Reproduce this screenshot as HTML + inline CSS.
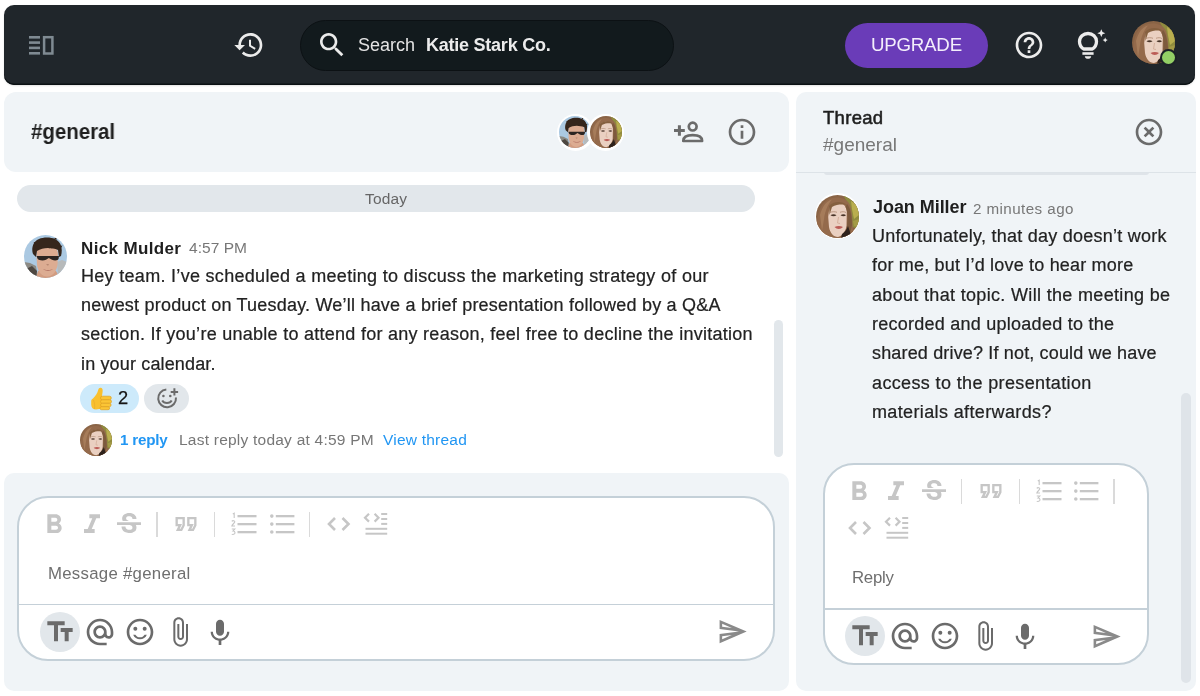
<!DOCTYPE html>
<html><head><meta charset="utf-8">
<style>
*{box-sizing:border-box;margin:0;padding:0}
html,body{width:1200px;height:696px;overflow:hidden;background:#fff;font-family:"Liberation Sans",sans-serif;color:#222}
.a{position:absolute}
.t{position:absolute;white-space:pre;line-height:1;will-change:transform}
svg{display:block}
</style></head><body>
<div class="a" style="left:4px;top:5px;width:1191.3px;height:79.6px;background:#20262b;border-radius:10px;box-shadow:inset 0 -1.6px 0 #0b1114, 0 1px 2px rgba(0,0,0,0.12)"></div>
<svg class="a" style="left:29px;top:36px;overflow:visible" width="26" height="20" viewBox="0 0 26 20"><g fill="#7f8a92"><rect x="0" y="0" width="11" height="2.6"/><rect x="0" y="5.3" width="11" height="2.6"/><rect x="0" y="10.6" width="11" height="2.6"/><rect x="0" y="16" width="11" height="2.6"/></g>
<rect x="15.1" y="1.2" width="8.3" height="16.3" fill="none" stroke="#7f8a92" stroke-width="2.5"/></svg>
<svg class="a" style="left:233.3px;top:28.6px" width="32" height="32" viewBox="0 0 24 24"><path fill="#ebebeb" d="M13 3c-4.97 0-9 4.03-9 9H1l3.89 3.89.07.14L9 12H6c0-3.87 3.13-7 7-7s7 3.13 7 7-3.13 7-7 7c-1.93 0-3.68-.79-4.94-2.06l-1.42 1.42C8.27 19.99 10.51 21 13 21c4.97 0 9-4.03 9-9s-4.03-9-9-9zm-1 5v5l4.28 2.54.72-1.21-3.5-2.08V8H12z" /></svg>
<div class="a" style="left:300px;top:20px;width:374px;height:51px;background:#121a1d;border-radius:26px;border:1.5px solid #0c1114"></div>
<svg class="a" style="left:316px;top:29.3px" width="32" height="32" viewBox="0 0 24 24"><path fill="#ebebeb" d="M15.5 14h-.79l-.28-.27C15.41 12.59 16 11.11 16 9.5 16 5.91 13.09 3 9.5 3S3 5.91 3 9.5 5.91 16 9.5 16c1.61 0 3.09-.59 4.23-1.57l.27.28v.79l5 4.99L20.49 19l-4.99-5zm-6 0C7.01 14 5 11.99 5 9.5S7.01 5 9.5 5 14 7.01 14 9.5 11.99 14 9.5 14z" /></svg>
<div class="t" style="left:358px;top:36.26px;font-size:18px;font-weight:400;color:#e4e4e4;letter-spacing:0px;">Search</div>
<div class="t" style="left:425.5px;top:36.26px;font-size:18px;font-weight:700;color:#ececec;letter-spacing:-0.24px;">Katie Stark Co.</div>
<div class="a" style="left:845px;top:22.5px;width:143px;height:45.5px;background:#6a3cb8;border-radius:23px;"></div>
<div class="t" style="left:870.5px;top:35.77px;font-size:18.7px;font-weight:400;color:#f3eefb;letter-spacing:-0.22px;">UPGRADE</div>
<svg class="a" style="left:1013.1px;top:29.25px" width="32" height="32" viewBox="0 0 24 24"><path fill="#ececec" d="M11 18h2v-2h-2v2zm1-16C6.48 2 2 6.48 2 12s4.48 10 10 10 10-4.48 10-10S17.52 2 12 2zm0 18c-4.41 0-8-3.59-8-8s3.59-8 8-8 8 3.59 8 8-3.59 8-8 8zm0-14c-2.21 0-4 1.79-4 4h2c0-1.1.9-2 2-2s2 .9 2 2c0 2-3 1.75-3 5h2c0-2.25 3-2.5 3-5 0-2.21-1.79-4-4-4z" /></svg>
<svg class="a" style="left:1074px;top:28px;overflow:visible" width="36" height="32" viewBox="0 0 36 32"><path d="M9.6 21 C6.6 19 5.5 16.5 5.5 13.5 C5.5 8.8 9.3 5.5 14 5.5 C18.7 5.5 22.5 8.8 22.5 13.5 C22.5 16.5 21.4 19 18.4 21 Z" fill="none" stroke="#ececec" stroke-width="3.3" stroke-linejoin="round"/>
<rect x="8.4" y="24.2" width="11.2" height="2.6" fill="#ececec"/>
<path d="M10.8 28.2 L17.2 28.2 C17 30 15.6 30.8 14 30.8 C12.4 30.8 11 30 10.8 28.2Z" fill="#ececec"/>
<path d="M27.3 1.3 L28.5 4.1 L31.3 5.2 L28.5 6.3 L27.3 9.1 L26.1 6.3 L23.3 5.2 L26.1 4.1 Z" fill="#ececec"/>
<path d="M31.2 9.6 L32 11.3 L33.7 12.1 L32 12.9 L31.2 14.6 L30.4 12.9 L28.7 12.1 L30.4 11.3 Z" fill="#ececec"/></svg>
<svg class="a" style="left:1131.5px;top:21px;overflow:visible" width="43" height="43" viewBox="0 0 43 43"><defs><clipPath id="j1131_21"><circle cx="21.5" cy="21.5" r="21.5"/></clipPath></defs>
<g clip-path="url(#j1131_21)">
<rect width="43" height="43" fill="#8a6446"/>
<path d="M27 0 L43 0 L43 34 L36 32 L34 12 Z" fill="#8f8c3e"/>
<path d="M35 6 L41 10 L43 20 L38 24 L36 14Z" fill="#b9ae4e"/>
<path d="M37 26 L43 24 L43 32 L38 31Z" fill="#a39a45"/>
<path d="M1 43 C0 30 1 10 12 4.5 C20 1 30 2 34 10 C37 18 36 32 38 43 Z" fill="#946a4b"/>
<path d="M4 20 C6 12 10 6 16 4.5 C12 9 9 16 8 24 L6 36 Z" fill="#a67c5a"/>
<path d="M13.5 12 C15 8.5 19 7.5 23 8 C27.5 8.5 30.5 11 30.8 17 L30.5 31 C29.5 37 26 41 22 42 C17.5 42 14 38 13 32 L12.2 22 Z" fill="#ead0c1"/>
<path d="M13 11 C17 6 26 5.5 31 10 C27 9.5 21 9 16 12 L13.5 20 Z" fill="#85603f"/>
<path d="M29.5 12 C32 16 32 26 30.5 34 L28 41 L33 43 L36 30 C36 20 34 12 31 9Z" fill="#7d5a3d"/>
<path d="M14.5 20.3 C16.2 18.9 18.8 18.9 20.5 20.3 C18.8 21.6 16.2 21.6 14.5 20.3Z" fill="#4a362a"/>
<path d="M24.5 20.3 C26.2 18.9 28.8 18.9 30 20.3 C28.8 21.6 26.2 21.6 24.5 20.3Z" fill="#4a362a"/>
<path d="M14 17.5 C16 16.5 19 16.5 21 17.3 M24 17.3 C26 16.5 28.5 16.5 30 17.5" stroke="#b08a72" stroke-width="0.8" fill="none"/>
<path d="M22.5 22 L21.5 28 L24 28.5" stroke="#d2ad98" stroke-width="0.9" fill="none"/>
<path d="M18.5 32 C21 30.6 24.5 30.6 27 32 C24.5 34.6 21 34.6 18.5 32Z" fill="#bb5c56"/>
<path d="M26 39 C29 37 31 34 32 31 L36 43 L25 43Z" fill="#2e221c"/>
</g></svg>
<div class="a" style="left:1159.5px;top:48.7px;width:17px;height:17px;background:#93cf65;border-radius:9px;border:2.5px solid #1c2227"></div>
<div class="a" style="left:4px;top:92px;width:785px;height:79.5px;background:#f0f4f7;border-radius:12px;"></div>
<div class="t" style="left:31px;top:121.32px;font-size:21.6px;font-weight:700;color:#1f1f1f;letter-spacing:0px;transform:scaleX(0.947);transform-origin:0 0">#general</div>
<div class="a" style="left:556.5px;top:113.5px;width:37.0px;height:37.0px;border-radius:50%;background:#fff"></div>
<svg class="a" style="left:559px;top:116px;overflow:visible" width="32" height="32" viewBox="0 0 43 43"><defs><clipPath id="n559_116"><circle cx="21.5" cy="21.5" r="21.5"/></clipPath></defs>
<g clip-path="url(#n559_116)">
<rect width="43" height="43" fill="#abc9e2"/>
<path d="M0 27 L6 28 L12 31 L14 43 L0 43Z" fill="#8c8a84"/>
<path d="M2 34 L8 31 L13 36 L12 43 L3 43Z" fill="#4d4741"/>
<path d="M33 27 L38 25 L43 27 L43 40 L34 40Z" fill="#b7babb"/>
<path d="M14 36 L32 36 L36 43 L12 43Z" fill="#d29c80"/>
<path d="M12.5 20 C12.5 12 17 9 23 9 C29 9 34 12 34 20 L33.5 30 C32.5 37 28 41.5 23 41.5 C18 41.5 14 37 13 30 Z" fill="#dcac92"/>
<path d="M9 19 C7 14 9 6 15 4 C19 2 27 2 31 4 C37 7 39 13 37 21 L35 22 L34 15 C31 13 27 14 24 13 C20 13 16 14 13 16 L12 22 Z" fill="#35261c"/>
<path d="M11 9 L9.5 7 L13 7.5Z M30 3.5 L32.5 2.5 L32.5 5Z M36 11 L38.5 10.5 L37 13Z" fill="#35261c"/>
<path d="M12.5 21 L35 21 L34.6 23.8 C34.2 25.6 30.5 26 28 24.8 L24.8 23 L22 24.8 C19.5 26 14.6 25.6 13.6 23.8Z" fill="#2c2522"/>
<path d="M22 29 L25 29 L24 31Z" fill="#b98a74"/>
<path d="M18.5 33.5 C21.5 35.5 26.5 35.5 29.5 33.5 C26.5 36.5 21.5 36.5 18.5 33.5Z" fill="#a8665a"/>
</g></svg>
<div class="a" style="left:587.0px;top:113.5px;width:37.0px;height:37.0px;border-radius:50%;background:#fff"></div>
<svg class="a" style="left:589.5px;top:116px;overflow:visible" width="32" height="32" viewBox="0 0 43 43"><defs><clipPath id="j589_116"><circle cx="21.5" cy="21.5" r="21.5"/></clipPath></defs>
<g clip-path="url(#j589_116)">
<rect width="43" height="43" fill="#8a6446"/>
<path d="M27 0 L43 0 L43 34 L36 32 L34 12 Z" fill="#8f8c3e"/>
<path d="M35 6 L41 10 L43 20 L38 24 L36 14Z" fill="#b9ae4e"/>
<path d="M37 26 L43 24 L43 32 L38 31Z" fill="#a39a45"/>
<path d="M1 43 C0 30 1 10 12 4.5 C20 1 30 2 34 10 C37 18 36 32 38 43 Z" fill="#946a4b"/>
<path d="M4 20 C6 12 10 6 16 4.5 C12 9 9 16 8 24 L6 36 Z" fill="#a67c5a"/>
<path d="M13.5 12 C15 8.5 19 7.5 23 8 C27.5 8.5 30.5 11 30.8 17 L30.5 31 C29.5 37 26 41 22 42 C17.5 42 14 38 13 32 L12.2 22 Z" fill="#ead0c1"/>
<path d="M13 11 C17 6 26 5.5 31 10 C27 9.5 21 9 16 12 L13.5 20 Z" fill="#85603f"/>
<path d="M29.5 12 C32 16 32 26 30.5 34 L28 41 L33 43 L36 30 C36 20 34 12 31 9Z" fill="#7d5a3d"/>
<path d="M14.5 20.3 C16.2 18.9 18.8 18.9 20.5 20.3 C18.8 21.6 16.2 21.6 14.5 20.3Z" fill="#4a362a"/>
<path d="M24.5 20.3 C26.2 18.9 28.8 18.9 30 20.3 C28.8 21.6 26.2 21.6 24.5 20.3Z" fill="#4a362a"/>
<path d="M14 17.5 C16 16.5 19 16.5 21 17.3 M24 17.3 C26 16.5 28.5 16.5 30 17.5" stroke="#b08a72" stroke-width="0.8" fill="none"/>
<path d="M22.5 22 L21.5 28 L24 28.5" stroke="#d2ad98" stroke-width="0.9" fill="none"/>
<path d="M18.5 32 C21 30.6 24.5 30.6 27 32 C24.5 34.6 21 34.6 18.5 32Z" fill="#bb5c56"/>
<path d="M26 39 C29 37 31 34 32 31 L36 43 L25 43Z" fill="#2e221c"/>
</g></svg>
<svg class="a" style="left:670px;top:118px;overflow:visible" width="36" height="28" viewBox="0 0 36 28"><path d="M4 12.5 H14.8 M9.4 7.2 V17.8" stroke="#6b6b6b" stroke-width="3" fill="none"/>
<circle cx="22.7" cy="8.6" r="3.9" fill="none" stroke="#6b6b6b" stroke-width="2.7"/>
<path d="M13.3 23 C13.3 19 17.5 17.2 22.7 17.2 C27.9 17.2 32.1 19 32.1 23 Z" fill="none" stroke="#6b6b6b" stroke-width="2.7" stroke-linejoin="round"/></svg>
<svg class="a" style="left:726.1px;top:115.8px" width="32" height="32" viewBox="0 0 24 24"><path fill="#6b6b6b" d="M11 7h2v2h-2zm0 4h2v6h-2zm1-9C6.48 2 2 6.48 2 12s4.48 10 10 10 10-4.48 10-10S17.52 2 12 2zm0 18c-4.41 0-8-3.59-8-8s3.59-8 8-8 8 3.59 8 8-3.59 8-8 8z" /></svg>
<div class="a" style="left:17px;top:185px;width:738px;height:27px;background:#e2e7eb;border-radius:14px;"></div>
<div class="t" style="left:365.4px;top:190.98px;font-size:15.5px;font-weight:400;color:#666;letter-spacing:0.15px;">Today</div>
<svg class="a" style="left:24px;top:234.5px;overflow:visible" width="43" height="43" viewBox="0 0 43 43"><defs><clipPath id="n24_234"><circle cx="21.5" cy="21.5" r="21.5"/></clipPath></defs>
<g clip-path="url(#n24_234)">
<rect width="43" height="43" fill="#abc9e2"/>
<path d="M0 27 L6 28 L12 31 L14 43 L0 43Z" fill="#8c8a84"/>
<path d="M2 34 L8 31 L13 36 L12 43 L3 43Z" fill="#4d4741"/>
<path d="M33 27 L38 25 L43 27 L43 40 L34 40Z" fill="#b7babb"/>
<path d="M14 36 L32 36 L36 43 L12 43Z" fill="#d29c80"/>
<path d="M12.5 20 C12.5 12 17 9 23 9 C29 9 34 12 34 20 L33.5 30 C32.5 37 28 41.5 23 41.5 C18 41.5 14 37 13 30 Z" fill="#dcac92"/>
<path d="M9 19 C7 14 9 6 15 4 C19 2 27 2 31 4 C37 7 39 13 37 21 L35 22 L34 15 C31 13 27 14 24 13 C20 13 16 14 13 16 L12 22 Z" fill="#35261c"/>
<path d="M11 9 L9.5 7 L13 7.5Z M30 3.5 L32.5 2.5 L32.5 5Z M36 11 L38.5 10.5 L37 13Z" fill="#35261c"/>
<path d="M12.5 21 L35 21 L34.6 23.8 C34.2 25.6 30.5 26 28 24.8 L24.8 23 L22 24.8 C19.5 26 14.6 25.6 13.6 23.8Z" fill="#2c2522"/>
<path d="M22 29 L25 29 L24 31Z" fill="#b98a74"/>
<path d="M18.5 33.5 C21.5 35.5 26.5 35.5 29.5 33.5 C26.5 36.5 21.5 36.5 18.5 33.5Z" fill="#a8665a"/>
</g></svg>
<div class="t" style="left:81px;top:239.61px;font-size:17px;font-weight:700;color:#1f1f1f;letter-spacing:0.35px;">Nick Mulder</div>
<div class="t" style="left:189px;top:240.08px;font-size:15.5px;font-weight:400;color:#777;letter-spacing:0.05px;">4:57 PM</div>
<div class="t" style="left:81px;top:266.66px;font-size:18px;font-weight:400;color:#222;letter-spacing:0.3px;-webkit-text-stroke:0.22px #222">Hey team. I’ve scheduled a meeting to discuss the marketing strategy of our</div>
<div class="t" style="left:81px;top:296.01px;font-size:18px;font-weight:400;color:#222;letter-spacing:0.21px;-webkit-text-stroke:0.22px #222">newest product on Tuesday. We’ll have a brief presentation followed by a Q&amp;A</div>
<div class="t" style="left:81px;top:325.36px;font-size:18px;font-weight:400;color:#222;letter-spacing:0.27px;-webkit-text-stroke:0.22px #222">section. If you’re unable to attend for any reason, feel free to decline the invitation</div>
<div class="t" style="left:81px;top:354.71px;font-size:18px;font-weight:400;color:#222;letter-spacing:0.15px;-webkit-text-stroke:0.22px #222">in your calendar.</div>
<div class="a" style="left:80px;top:384px;width:59px;height:29px;background:#cdeafb;border-radius:15px;"></div>
<div class="t" style="left:118px;top:389.31px;font-size:18.3px;font-weight:400;color:#151515;letter-spacing:0px;-webkit-text-stroke:0.25px #151515">2</div>
<div class="a" style="left:144px;top:384px;width:45px;height:29px;background:#e2e7eb;border-radius:15px;"></div>
<svg class="a" style="left:155px;top:386px;overflow:visible" width="25" height="24" viewBox="0 0 25 24"><path d="M20.97 11.52 A8.9 8.9 0 1 1 11.32 3.43" fill="none" stroke="#6b6b6b" stroke-width="2"/>
<circle cx="8.4" cy="10" r="1.3" fill="#6b6b6b"/><circle cx="15.3" cy="10" r="1.3" fill="#6b6b6b"/>
<path d="M7.2 14.6 C9 17.9 14.9 17.9 16.7 14.6" fill="none" stroke="#6b6b6b" stroke-width="2"/>
<path d="M19.4 2.2 V9.6 M15.7 5.9 H23.1" stroke="#6b6b6b" stroke-width="2"/></svg>
<svg class="a" style="left:90px;top:387px;overflow:visible" width="23" height="23" viewBox="0 0 23 23"><path d="M3 11.5 C5.5 9 7.5 6 8.2 3 C8.6 1.2 9.6 0.5 10.9 0.7 C12.6 1 13 3 12.5 5.5 L11.8 10 L12 21.5 L6 22.5 C3 22.5 1.2 20.5 1.2 17.5 L1.2 14 C1.2 12.8 2 12 3 11.5Z" fill="#f9c02e"/>
<g fill="#fbc535" stroke="#e0a020" stroke-width="0.7"><rect x="10.5" y="9.2" width="10.8" height="3.6" rx="1.8"/><rect x="10.5" y="12.8" width="11" height="3.5" rx="1.75"/><rect x="10.5" y="16.3" width="10.6" height="3.4" rx="1.7"/><rect x="10" y="19.7" width="9.6" height="3" rx="1.5"/></g>
<path d="M3.5 13 C4.5 16 5 19 4.5 22" stroke="#e8a826" stroke-width="0.6" fill="none"/></svg>
<svg class="a" style="left:80px;top:424px;overflow:visible" width="32" height="32" viewBox="0 0 43 43"><defs><clipPath id="j80_424"><circle cx="21.5" cy="21.5" r="21.5"/></clipPath></defs>
<g clip-path="url(#j80_424)">
<rect width="43" height="43" fill="#8a6446"/>
<path d="M27 0 L43 0 L43 34 L36 32 L34 12 Z" fill="#8f8c3e"/>
<path d="M35 6 L41 10 L43 20 L38 24 L36 14Z" fill="#b9ae4e"/>
<path d="M37 26 L43 24 L43 32 L38 31Z" fill="#a39a45"/>
<path d="M1 43 C0 30 1 10 12 4.5 C20 1 30 2 34 10 C37 18 36 32 38 43 Z" fill="#946a4b"/>
<path d="M4 20 C6 12 10 6 16 4.5 C12 9 9 16 8 24 L6 36 Z" fill="#a67c5a"/>
<path d="M13.5 12 C15 8.5 19 7.5 23 8 C27.5 8.5 30.5 11 30.8 17 L30.5 31 C29.5 37 26 41 22 42 C17.5 42 14 38 13 32 L12.2 22 Z" fill="#ead0c1"/>
<path d="M13 11 C17 6 26 5.5 31 10 C27 9.5 21 9 16 12 L13.5 20 Z" fill="#85603f"/>
<path d="M29.5 12 C32 16 32 26 30.5 34 L28 41 L33 43 L36 30 C36 20 34 12 31 9Z" fill="#7d5a3d"/>
<path d="M14.5 20.3 C16.2 18.9 18.8 18.9 20.5 20.3 C18.8 21.6 16.2 21.6 14.5 20.3Z" fill="#4a362a"/>
<path d="M24.5 20.3 C26.2 18.9 28.8 18.9 30 20.3 C28.8 21.6 26.2 21.6 24.5 20.3Z" fill="#4a362a"/>
<path d="M14 17.5 C16 16.5 19 16.5 21 17.3 M24 17.3 C26 16.5 28.5 16.5 30 17.5" stroke="#b08a72" stroke-width="0.8" fill="none"/>
<path d="M22.5 22 L21.5 28 L24 28.5" stroke="#d2ad98" stroke-width="0.9" fill="none"/>
<path d="M18.5 32 C21 30.6 24.5 30.6 27 32 C24.5 34.6 21 34.6 18.5 32Z" fill="#bb5c56"/>
<path d="M26 39 C29 37 31 34 32 31 L36 43 L25 43Z" fill="#2e221c"/>
</g></svg>
<div class="t" style="left:120.2px;top:432.23px;font-size:15.2px;font-weight:700;color:#2196f3;letter-spacing:-0.2px;">1 reply</div>
<div class="t" style="left:179px;top:431.98px;font-size:15.5px;font-weight:400;color:#777;letter-spacing:0.23px;">Last reply today at 4:59 PM</div>
<div class="t" style="left:383px;top:431.98px;font-size:15.5px;font-weight:400;color:#2196f3;letter-spacing:0.22px;">View thread</div>
<div class="a" style="left:774.2px;top:320.2px;width:9.3px;height:137.3px;background:#e2e7eb;border-radius:5px;"></div>
<div class="a" style="left:4px;top:473px;width:785px;height:218px;background:#f0f4f7;border-radius:10px;"></div>
<div class="a" style="left:17px;top:496px;width:758px;height:165px;background:#fff;border-radius:31px;border:2.5px solid #c4d0d8"></div>
<div class="a" style="left:19px;top:603.5px;width:754px;height:1.5px;background:#c5d0d8;border-radius:0px;"></div>
<svg class="a" style="left:38.3px;top:509.4px" width="32" height="32" viewBox="0 0 24 24"><path fill="#c6c6c6" d="M15.6 10.79c.97-.67 1.65-1.77 1.65-2.79 0-2.26-1.75-4-4-4H7v14h7.04c2.09 0 3.71-1.7 3.71-3.79 0-1.52-.86-2.82-2.15-3.42zM10 6.5h3c.83 0 1.5.67 1.5 1.5s-.67 1.5-1.5 1.5h-3v-3zm3.5 9H10v-3h3.5c.83 0 1.5.67 1.5 1.5s-.67 1.5-1.5 1.5z" /></svg>
<svg class="a" style="left:76.0px;top:509.4px" width="32" height="32" viewBox="0 0 24 24"><path fill="#c6c6c6" d="M10 4v3h2.21l-3.42 8H6v3h8v-3h-2.21l3.42-8H18V4z" /></svg>
<svg class="a" style="left:113.3px;top:509.4px" width="32" height="32" viewBox="0 0 24 24"><path fill="#c6c6c6" d="M7.24 8.75c-.26-.48-.39-1.03-.39-1.67 0-.61.13-1.16.4-1.67.26-.5.63-.93 1.11-1.29.48-.35 1.05-.63 1.7-.83.66-.19 1.39-.29 2.18-.29.81 0 1.54.11 2.21.34.66.22 1.23.54 1.69.94.47.4.83.88 1.08 1.43.25.55.38 1.15.38 1.81h-3.01c0-.31-.05-.59-.15-.85-.09-.27-.24-.49-.44-.68-.2-.19-.45-.33-.75-.44-.3-.1-.66-.16-1.06-.16-.39 0-.74.04-1.03.13-.29.09-.53.21-.72.36-.19.16-.34.34-.44.55-.1.21-.15.43-.15.66 0 .48.25.88.74 1.21.38.25.77.48 1.41.7H7.39c-.05-.08-.11-.17-.15-.25zM21 12v-2H3v2h9.62c.18.07.4.14.55.2.37.17.66.34.87.51.21.17.35.36.43.57.07.2.11.43.11.69 0 .23-.05.45-.14.66-.09.2-.23.38-.42.53-.19.15-.42.26-.71.35-.29.08-.63.13-1.01.13-.43 0-.83-.04-1.18-.13s-.66-.23-.91-.42c-.25-.19-.45-.44-.59-.75-.14-.31-.25-.76-.25-1.21H6.4c0 .55.08 1.13.24 1.58.16.45.37.85.65 1.21.28.35.6.66.98.92.37.26.78.48 1.22.65.44.17.9.3 1.38.39.48.08.96.13 1.44.13.8 0 1.53-.09 2.18-.28s1.21-.45 1.67-.79c.46-.34.82-.77 1.07-1.27s.38-1.07.38-1.71c0-.6-.1-1.14-.31-1.61-.05-.11-.11-.23-.17-.33H21z" /></svg>
<div class="a" style="left:156.2px;top:512px;width:1.5px;height:25px;background:#dadada;border-radius:0px;"></div>
<svg class="a" style="left:172.3px;top:509.9px" width="28" height="28" viewBox="0 0 24 24"><path fill="#c6c6c6" d="M18.62 18h-5.24l2-4H13V6h8v7.24L18.62 18zm-2-2h.76L19 12.76V8h-4v4h3.62l-2 4zm-8 2H3.38l2-4H3V6h8v7.24L8.62 18zm-2-2h.76L9 12.76V8H5v4h3.62l-2 4z" /></svg>
<div class="a" style="left:213.6px;top:512px;width:1.5px;height:25px;background:#dadada;border-radius:0px;"></div>
<svg class="a" style="left:231px;top:512.5px;overflow:visible" width="27" height="23" viewBox="0 0 27 23"><g fill="#c6c6c6"><rect x="6.5" y="2" width="19" height="2.3"/><rect x="6.5" y="10" width="19" height="2.3"/><rect x="6.5" y="18" width="19" height="2.3"/></g>
<g fill="none" stroke="#c6c6c6" stroke-width="1.1"><path d="M1.8 1 L3.2 0.2 L3.2 5"/><path d="M0.8 8.3 C1.5 7.4 3.8 7.4 3.8 8.8 C3.8 10 1 11.5 0.8 13 L4 13"/><path d="M0.8 16 L3.8 16 L2 18 C3.8 18 4 19 4 19.8 C4 21.5 1.5 21.8 0.8 21"/></g></svg>
<svg class="a" style="left:269.5px;top:512.9px;overflow:visible" width="25" height="22" viewBox="0 0 25 22"><g fill="#c6c6c6"><circle cx="1.8" cy="3.1" r="1.8"/><circle cx="1.8" cy="11.1" r="1.8"/><circle cx="1.8" cy="19" r="1.8"/><rect x="5.8" y="2" width="18.6" height="2.3"/><rect x="5.8" y="10" width="18.6" height="2.3"/><rect x="5.8" y="18" width="18.6" height="2.3"/></g></svg>
<div class="a" style="left:308.6px;top:512px;width:1.5px;height:25px;background:#dadada;border-radius:0px;"></div>
<svg class="a" style="left:327px;top:516.8px;overflow:visible" width="24" height="14" viewBox="0 0 24 14"><g fill="none" stroke="#c6c6c6" stroke-width="2.6"><path d="M8 1 L2 7 L8 13"/><path d="M15.5 1 L21.5 7 L15.5 13"/></g></svg>
<svg class="a" style="left:363.5px;top:512.8px;overflow:visible" width="24" height="22" viewBox="0 0 24 22"><g fill="none" stroke="#c6c6c6" stroke-width="2.2"><path d="M5 0.8 L1 4.7 L5 8.6"/><path d="M10.6 0.8 L14.5 4.7 L10.6 8.6"/></g>
<g fill="#c6c6c6"><rect x="17.2" y="0" width="6" height="2"/><rect x="17.2" y="5" width="6" height="2"/><rect x="17.2" y="9.9" width="6" height="2"/><rect x="1.5" y="14.8" width="21.7" height="2"/><rect x="1.5" y="19.7" width="21.7" height="2"/></g></svg>
<div class="t" style="left:47.6px;top:566.18px;font-size:16.8px;font-weight:400;color:#6f6f6f;letter-spacing:0.28px;">Message #general</div>
<div class="a" style="left:40px;top:612px;width:40px;height:40px;background:#e2e7eb;border-radius:20px;"></div>
<svg class="a" style="left:44.2px;top:615.9px" width="32" height="32" viewBox="0 0 24 24"><path fill="#6b6b6b" d="M2.5 4v3h5v12h3V7h5V4h-13zm19 5h-9v3h3v7h3v-7h3V9z" /></svg>
<svg class="a" style="left:84.4px;top:616.3px" width="32" height="32" viewBox="0 0 24 24"><path fill="#6b6b6b" d="M12 2C6.48 2 2 6.48 2 12s4.48 10 10 10h5v-2h-5c-4.34 0-8-3.66-8-8s3.66-8 8-8 8 3.66 8 8v1.43c0 .79-.71 1.57-1.5 1.57s-1.5-.78-1.5-1.57V12c0-2.76-2.24-5-5-5s-5 2.24-5 5 2.24 5 5 5c1.38 0 2.64-.56 3.54-1.47.65.89 1.77 1.47 2.96 1.47 1.97 0 3.5-1.6 3.5-3.57V12c0-5.52-4.48-10-10-10zm0 13c-1.66 0-3-1.34-3-3s1.34-3 3-3 3 1.34 3 3-1.34 3-3 3z" /></svg>
<svg class="a" style="left:124.3px;top:616.1999999999999px" width="32" height="32" viewBox="0 0 24 24"><path fill="#6b6b6b" d="M15.5 9.5m-1.5 0a1.5 1.5 0 1 0 3 0a1.5 1.5 0 1 0 -3 0M8.5 9.5m-1.5 0a1.5 1.5 0 1 0 3 0a1.5 1.5 0 1 0 -3 0M12 16c-1.48 0-2.75-.81-3.45-2H6.88c.8 2.05 2.79 3.5 5.12 3.5s4.32-1.45 5.12-3.5h-1.67c-.7 1.19-1.97 2-3.45 2zm-.01-14C6.47 2 2 6.48 2 12s4.47 10 9.99 10C17.52 22 22 17.52 22 12S17.52 2 11.99 2zM12 20c-4.42 0-8-3.58-8-8s3.58-8 8-8 8 3.58 8 8-3.58 8-8 8z" /></svg>
<svg class="a" style="left:164.4px;top:616.1px" width="32" height="32" viewBox="0 0 24 24"><path fill="#6b6b6b" d="M16.5 6v11.5c0 2.21-1.79 4-4 4s-4-1.79-4-4V5c0-1.38 1.12-2.5 2.5-2.5s2.5 1.12 2.5 2.5v10.5c0 .55-.45 1-1 1s-1-.45-1-1V6H10v9.5c0 1.38 1.12 2.5 2.5 2.5s2.5-1.12 2.5-2.5V5c0-2.21-1.79-4-4-4S7 2.79 7 5v12.5c0 3.04 2.46 5.5 5.5 5.5s5.5-2.46 5.5-5.5V6h-1.5z" /></svg>
<svg class="a" style="left:204.39999999999998px;top:617.1px" width="32" height="32" viewBox="0 0 24 24"><path fill="#6b6b6b" d="M12 14c1.66 0 2.99-1.34 2.99-3L15 5c0-1.66-1.34-3-3-3S9 3.34 9 5v6c0 1.66 1.34 3 3 3zm5.3-3c0 3-2.54 5.1-5.3 5.1S6.7 14 6.7 11H5c0 3.41 2.72 6.23 6 6.72V21h2v-3.28c3.28-.48 6-3.3 6-6.72h-1.7z" /></svg>
<svg class="a" style="left:716.9px;top:616.4px" width="31" height="31" viewBox="0 0 24 24"><path fill="#8a8a8a" d="M4.01 6.03l7.51 3.22-7.52-1 .01-2.22m7.5 8.72L4 17.97v-2.22l7.51-1M2.01 3L2 10l15 2-15 2 .01 7L23 12 2.01 3z" /></svg>
<div class="a" style="left:795.6px;top:92px;width:400.4px;height:599px;background:#f0f4f7;border-radius:10px;"></div>
<div class="a" style="left:823.5px;top:172px;width:325.5px;height:2.8px;background:#dfe4e9;border-radius:0px;border-radius:0 0 3px 3px"></div>
<div class="a" style="left:796px;top:172px;width:400px;height:1.2px;background:#dde3e8;border-radius:0px;"></div>
<div class="t" style="left:823.2px;top:108.94px;font-size:18.5px;font-weight:400;color:#1f1f1f;letter-spacing:0.3px;-webkit-text-stroke:0.55px #1f1f1f">Thread</div>
<div class="t" style="left:823.2px;top:134.92px;font-size:19px;font-weight:400;color:#777;letter-spacing:0px;">#general</div>
<svg class="a" style="left:1133.3px;top:116px" width="32" height="32" viewBox="0 0 24 24"><path fill="#6b6b6b" d="M14.59 8L12 10.59 9.41 8 8 9.41 10.59 12 8 14.59 9.41 16 12 13.41 14.59 16 16 14.59 13.41 12 16 9.41 14.59 8zM12 2C6.47 2 2 6.47 2 12s4.47 10 10 10 10-4.47 10-10S17.53 2 12 2zm0 18c-4.41 0-8-3.59-8-8s3.59-8 8-8 8 3.59 8 8-3.59 8-8 8z" /></svg>
<div class="a" style="left:814.5px;top:193.3px;width:45.4px;height:45.4px;border-radius:50%;background:#fff"></div>
<svg class="a" style="left:815.7px;top:194.5px;overflow:visible" width="43" height="43" viewBox="0 0 43 43"><defs><clipPath id="j815_194"><circle cx="21.5" cy="21.5" r="21.5"/></clipPath></defs>
<g clip-path="url(#j815_194)">
<rect width="43" height="43" fill="#8a6446"/>
<path d="M27 0 L43 0 L43 34 L36 32 L34 12 Z" fill="#8f8c3e"/>
<path d="M35 6 L41 10 L43 20 L38 24 L36 14Z" fill="#b9ae4e"/>
<path d="M37 26 L43 24 L43 32 L38 31Z" fill="#a39a45"/>
<path d="M1 43 C0 30 1 10 12 4.5 C20 1 30 2 34 10 C37 18 36 32 38 43 Z" fill="#946a4b"/>
<path d="M4 20 C6 12 10 6 16 4.5 C12 9 9 16 8 24 L6 36 Z" fill="#a67c5a"/>
<path d="M13.5 12 C15 8.5 19 7.5 23 8 C27.5 8.5 30.5 11 30.8 17 L30.5 31 C29.5 37 26 41 22 42 C17.5 42 14 38 13 32 L12.2 22 Z" fill="#ead0c1"/>
<path d="M13 11 C17 6 26 5.5 31 10 C27 9.5 21 9 16 12 L13.5 20 Z" fill="#85603f"/>
<path d="M29.5 12 C32 16 32 26 30.5 34 L28 41 L33 43 L36 30 C36 20 34 12 31 9Z" fill="#7d5a3d"/>
<path d="M14.5 20.3 C16.2 18.9 18.8 18.9 20.5 20.3 C18.8 21.6 16.2 21.6 14.5 20.3Z" fill="#4a362a"/>
<path d="M24.5 20.3 C26.2 18.9 28.8 18.9 30 20.3 C28.8 21.6 26.2 21.6 24.5 20.3Z" fill="#4a362a"/>
<path d="M14 17.5 C16 16.5 19 16.5 21 17.3 M24 17.3 C26 16.5 28.5 16.5 30 17.5" stroke="#b08a72" stroke-width="0.8" fill="none"/>
<path d="M22.5 22 L21.5 28 L24 28.5" stroke="#d2ad98" stroke-width="0.9" fill="none"/>
<path d="M18.5 32 C21 30.6 24.5 30.6 27 32 C24.5 34.6 21 34.6 18.5 32Z" fill="#bb5c56"/>
<path d="M26 39 C29 37 31 34 32 31 L36 43 L25 43Z" fill="#2e221c"/>
</g></svg>
<div class="t" style="left:872.5px;top:198.46px;font-size:18px;font-weight:700;color:#1f1f1f;letter-spacing:-0.05px;">Joan Miller</div>
<div class="t" style="left:973px;top:201.03px;font-size:15.2px;font-weight:400;color:#777;letter-spacing:0.42px;">2 minutes ago</div>
<div class="t" style="left:872.1px;top:227.16px;font-size:18px;font-weight:400;color:#222;letter-spacing:0.25px;-webkit-text-stroke:0.22px #222">Unfortunately, that day doesn’t work</div>
<div class="t" style="left:872.1px;top:256.46px;font-size:18px;font-weight:400;color:#222;letter-spacing:0.19px;-webkit-text-stroke:0.22px #222">for me, but I’d love to hear more</div>
<div class="t" style="left:872.1px;top:285.76px;font-size:18px;font-weight:400;color:#222;letter-spacing:0.33px;-webkit-text-stroke:0.22px #222">about that topic. Will the meeting be</div>
<div class="t" style="left:872.1px;top:315.06px;font-size:18px;font-weight:400;color:#222;letter-spacing:0.25px;-webkit-text-stroke:0.22px #222">recorded and uploaded to the</div>
<div class="t" style="left:872.1px;top:344.36px;font-size:18px;font-weight:400;color:#222;letter-spacing:0.16px;-webkit-text-stroke:0.22px #222">shared drive? If not, could we have</div>
<div class="t" style="left:872.1px;top:373.66px;font-size:18px;font-weight:400;color:#222;letter-spacing:0.37px;-webkit-text-stroke:0.22px #222">access to the presentation</div>
<div class="t" style="left:872.1px;top:402.96px;font-size:18px;font-weight:400;color:#222;letter-spacing:0.37px;-webkit-text-stroke:0.22px #222">materials afterwards?</div>
<div class="a" style="left:1181.2px;top:393px;width:9.8px;height:290px;background:#dfe4e9;border-radius:5px;"></div>
<div class="a" style="left:822.5px;top:463px;width:326.3px;height:201.5px;background:#fff;border-radius:31px;border:2.5px solid #c4d0d8"></div>
<div class="a" style="left:824.5px;top:608px;width:322.3px;height:1.5px;background:#c5d0d8;border-radius:0px;"></div>
<svg class="a" style="left:842.5px;top:476.2px" width="32" height="32" viewBox="0 0 24 24"><path fill="#c6c6c6" d="M15.6 10.79c.97-.67 1.65-1.77 1.65-2.79 0-2.26-1.75-4-4-4H7v14h7.04c2.09 0 3.71-1.7 3.71-3.79 0-1.52-.86-2.82-2.15-3.42zM10 6.5h3c.83 0 1.5.67 1.5 1.5s-.67 1.5-1.5 1.5h-3v-3zm3.5 9H10v-3h3.5c.83 0 1.5.67 1.5 1.5s-.67 1.5-1.5 1.5z" /></svg>
<svg class="a" style="left:880.2px;top:476.2px" width="32" height="32" viewBox="0 0 24 24"><path fill="#c6c6c6" d="M10 4v3h2.21l-3.42 8H6v3h8v-3h-2.21l3.42-8H18V4z" /></svg>
<svg class="a" style="left:917.5px;top:476.2px" width="32" height="32" viewBox="0 0 24 24"><path fill="#c6c6c6" d="M7.24 8.75c-.26-.48-.39-1.03-.39-1.67 0-.61.13-1.16.4-1.67.26-.5.63-.93 1.11-1.29.48-.35 1.05-.63 1.7-.83.66-.19 1.39-.29 2.18-.29.81 0 1.54.11 2.21.34.66.22 1.23.54 1.69.94.47.4.83.88 1.08 1.43.25.55.38 1.15.38 1.81h-3.01c0-.31-.05-.59-.15-.85-.09-.27-.24-.49-.44-.68-.2-.19-.45-.33-.75-.44-.3-.1-.66-.16-1.06-.16-.39 0-.74.04-1.03.13-.29.09-.53.21-.72.36-.19.16-.34.34-.44.55-.1.21-.15.43-.15.66 0 .48.25.88.74 1.21.38.25.77.48 1.41.7H7.39c-.05-.08-.11-.17-.15-.25zM21 12v-2H3v2h9.62c.18.07.4.14.55.2.37.17.66.34.87.51.21.17.35.36.43.57.07.2.11.43.11.69 0 .23-.05.45-.14.66-.09.2-.23.38-.42.53-.19.15-.42.26-.71.35-.29.08-.63.13-1.01.13-.43 0-.83-.04-1.18-.13s-.66-.23-.91-.42c-.25-.19-.45-.44-.59-.75-.14-.31-.25-.76-.25-1.21H6.4c0 .55.08 1.13.24 1.58.16.45.37.85.65 1.21.28.35.6.66.98.92.37.26.78.48 1.22.65.44.17.9.3 1.38.39.48.08.96.13 1.44.13.8 0 1.53-.09 2.18-.28s1.21-.45 1.67-.79c.46-.34.82-.77 1.07-1.27s.38-1.07.38-1.71c0-.6-.1-1.14-.31-1.61-.05-.11-.11-.23-.17-.33H21z" /></svg>
<div class="a" style="left:960.6px;top:478.7px;width:1.5px;height:25px;background:#dadada;border-radius:0px;"></div>
<svg class="a" style="left:977.3px;top:476.7px" width="28" height="28" viewBox="0 0 24 24"><path fill="#c6c6c6" d="M18.62 18h-5.24l2-4H13V6h8v7.24L18.62 18zm-2-2h.76L19 12.76V8h-4v4h3.62l-2 4zm-8 2H3.38l2-4H3V6h8v7.24L8.62 18zm-2-2h.76L9 12.76V8H5v4h3.62l-2 4z" /></svg>
<div class="a" style="left:1018.5px;top:478.7px;width:1.5px;height:25px;background:#dadada;border-radius:0px;"></div>
<svg class="a" style="left:1036px;top:479.5px;overflow:visible" width="27" height="23" viewBox="0 0 27 23"><g fill="#c6c6c6"><rect x="6.5" y="2" width="19" height="2.3"/><rect x="6.5" y="10" width="19" height="2.3"/><rect x="6.5" y="18" width="19" height="2.3"/></g>
<g fill="none" stroke="#c6c6c6" stroke-width="1.1"><path d="M1.8 1 L3.2 0.2 L3.2 5"/><path d="M0.8 8.3 C1.5 7.4 3.8 7.4 3.8 8.8 C3.8 10 1 11.5 0.8 13 L4 13"/><path d="M0.8 16 L3.8 16 L2 18 C3.8 18 4 19 4 19.8 C4 21.5 1.5 21.8 0.8 21"/></g></svg>
<svg class="a" style="left:1074px;top:479.9px;overflow:visible" width="25" height="22" viewBox="0 0 25 22"><g fill="#c6c6c6"><circle cx="1.8" cy="3.1" r="1.8"/><circle cx="1.8" cy="11.1" r="1.8"/><circle cx="1.8" cy="19" r="1.8"/><rect x="5.8" y="2" width="18.6" height="2.3"/><rect x="5.8" y="10" width="18.6" height="2.3"/><rect x="5.8" y="18" width="18.6" height="2.3"/></g></svg>
<div class="a" style="left:1113.2px;top:478.7px;width:1.5px;height:25px;background:#dadada;border-radius:0px;"></div>
<svg class="a" style="left:847.8px;top:521px;overflow:visible" width="24" height="14" viewBox="0 0 24 14"><g fill="none" stroke="#c6c6c6" stroke-width="2.6"><path d="M8 1 L2 7 L8 13"/><path d="M15.5 1 L21.5 7 L15.5 13"/></g></svg>
<svg class="a" style="left:884.8px;top:516.5px;overflow:visible" width="24" height="22" viewBox="0 0 24 22"><g fill="none" stroke="#c6c6c6" stroke-width="2.2"><path d="M5 0.8 L1 4.7 L5 8.6"/><path d="M10.6 0.8 L14.5 4.7 L10.6 8.6"/></g>
<g fill="#c6c6c6"><rect x="17.2" y="0" width="6" height="2"/><rect x="17.2" y="5" width="6" height="2"/><rect x="17.2" y="9.9" width="6" height="2"/><rect x="1.5" y="14.8" width="21.7" height="2"/><rect x="1.5" y="19.7" width="21.7" height="2"/></g></svg>
<div class="t" style="left:852px;top:569.68px;font-size:16.8px;font-weight:400;color:#6f6f6f;letter-spacing:-0.28px;">Reply</div>
<div class="a" style="left:845px;top:616px;width:40px;height:40px;background:#e2e7eb;border-radius:20px;"></div>
<svg class="a" style="left:849.2px;top:619.9px" width="32" height="32" viewBox="0 0 24 24"><path fill="#6b6b6b" d="M2.5 4v3h5v12h3V7h5V4h-13zm19 5h-9v3h3v7h3v-7h3V9z" /></svg>
<svg class="a" style="left:889.4000000000001px;top:620.3px" width="32" height="32" viewBox="0 0 24 24"><path fill="#6b6b6b" d="M12 2C6.48 2 2 6.48 2 12s4.48 10 10 10h5v-2h-5c-4.34 0-8-3.66-8-8s3.66-8 8-8 8 3.66 8 8v1.43c0 .79-.71 1.57-1.5 1.57s-1.5-.78-1.5-1.57V12c0-2.76-2.24-5-5-5s-5 2.24-5 5 2.24 5 5 5c1.38 0 2.64-.56 3.54-1.47.65.89 1.77 1.47 2.96 1.47 1.97 0 3.5-1.6 3.5-3.57V12c0-5.52-4.48-10-10-10zm0 13c-1.66 0-3-1.34-3-3s1.34-3 3-3 3 1.34 3 3-1.34 3-3 3z" /></svg>
<svg class="a" style="left:929.3000000000001px;top:620.1999999999999px" width="32" height="32" viewBox="0 0 24 24"><path fill="#6b6b6b" d="M15.5 9.5m-1.5 0a1.5 1.5 0 1 0 3 0a1.5 1.5 0 1 0 -3 0M8.5 9.5m-1.5 0a1.5 1.5 0 1 0 3 0a1.5 1.5 0 1 0 -3 0M12 16c-1.48 0-2.75-.81-3.45-2H6.88c.8 2.05 2.79 3.5 5.12 3.5s4.32-1.45 5.12-3.5h-1.67c-.7 1.19-1.97 2-3.45 2zm-.01-14C6.47 2 2 6.48 2 12s4.47 10 9.99 10C17.52 22 22 17.52 22 12S17.52 2 11.99 2zM12 20c-4.42 0-8-3.58-8-8s3.58-8 8-8 8 3.58 8 8-3.58 8-8 8z" /></svg>
<svg class="a" style="left:969.4000000000001px;top:620.1px" width="32" height="32" viewBox="0 0 24 24"><path fill="#6b6b6b" d="M16.5 6v11.5c0 2.21-1.79 4-4 4s-4-1.79-4-4V5c0-1.38 1.12-2.5 2.5-2.5s2.5 1.12 2.5 2.5v10.5c0 .55-.45 1-1 1s-1-.45-1-1V6H10v9.5c0 1.38 1.12 2.5 2.5 2.5s2.5-1.12 2.5-2.5V5c0-2.21-1.79-4-4-4S7 2.79 7 5v12.5c0 3.04 2.46 5.5 5.5 5.5s5.5-2.46 5.5-5.5V6h-1.5z" /></svg>
<svg class="a" style="left:1009.4000000000001px;top:621.1px" width="32" height="32" viewBox="0 0 24 24"><path fill="#6b6b6b" d="M12 14c1.66 0 2.99-1.34 2.99-3L15 5c0-1.66-1.34-3-3-3S9 3.34 9 5v6c0 1.66 1.34 3 3 3zm5.3-3c0 3-2.54 5.1-5.3 5.1S6.7 14 6.7 11H5c0 3.41 2.72 6.23 6 6.72V21h2v-3.28c3.28-.48 6-3.3 6-6.72h-1.7z" /></svg>
<svg class="a" style="left:1090.6px;top:620.6px" width="31" height="31" viewBox="0 0 24 24"><path fill="#8a8a8a" d="M4.01 6.03l7.51 3.22-7.52-1 .01-2.22m7.5 8.72L4 17.97v-2.22l7.51-1M2.01 3L2 10l15 2-15 2 .01 7L23 12 2.01 3z" /></svg>
</body></html>
